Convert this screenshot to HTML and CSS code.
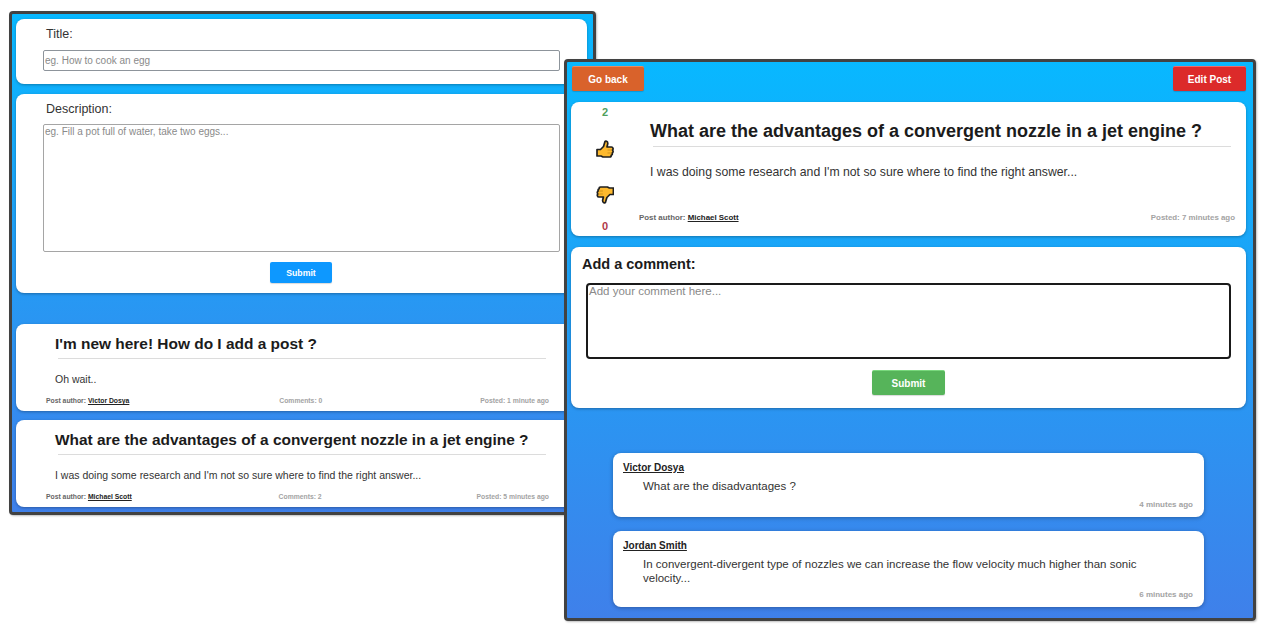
FILE: index.html
```html
<!DOCTYPE html>
<html lang="en">
<head>
<meta charset="utf-8">
<title>Forum posts</title>
<link rel="stylesheet" href="styles.css">
</head>
<body>
<section class="window window-list">
  <div class="card field-card title-card">
    <label class="field-label">Title:</label>
    <input class="field-input" type="text" placeholder="eg. How to cook an egg">
  </div>
  <div class="card field-card desc-card">
    <label class="field-label">Description:</label>
    <textarea class="field-area" placeholder="eg. Fill a pot full of water, take two eggs..."></textarea>
    <button class="btn btn-blue">Submit</button>
  </div>
  <article class="card post first-post">
    <h2 class="post-title">I'm new here! How do I add a post ?</h2>
    <p class="post-body">Oh wait..</p>
    <div class="post-meta">
      <span>Post author: <a class="author">Victor Dosya</a></span>
      <span class="muted count-link">Comments: 0</span>
      <span class="muted">Posted: 1 minute ago</span>
    </div>
  </article>
  <article class="card post">
    <h2 class="post-title">What are the advantages of a convergent nozzle in a jet engine ?</h2>
    <p class="post-body">I was doing some research and I'm not so sure where to find the right answer...</p>
    <div class="post-meta">
      <span>Post author: <a class="author">Michael Scott</a></span>
      <span class="muted count-link">Comments: 2</span>
      <span class="muted">Posted: 5 minutes ago</span>
    </div>
  </article>
</section>

<section class="window window-detail">
  <div class="top-bar">
    <button class="btn btn-orange">Go back</button>
    <button class="btn btn-red">Edit Post</button>
  </div>
  <article class="card detail">
    <div class="votes">
      <span class="count up">2</span>
      <svg class="thumb thumb-up" viewBox="0 0 18.400 18" aria-hidden="true"><path d="M1 9.500H4.500L7.500 6.500L9 1.500C9.500.8 11.800 1 11.800 3.500L11 7H15.500C17.200 7 17.500 9.500 16.500 10C17.500 11 17.200 12.500 16.200 13C16.600 14.200 16 15 15.200 15.300C15.300 16.500 14.800 17 13.800 17H7L5 16H1Z" fill="#fdb92e" stroke="#1f1f1f" stroke-width="1.700" stroke-linejoin="round"/><path d="M11.500 10H16M11.500 13H15.500" fill="none" stroke="#c48a1a" stroke-width=".8"/></svg>
      <svg class="thumb thumb-down" viewBox="0 0 18.400 18" aria-hidden="true"><g transform="rotate(180 9.200 9)"><path d="M1 9.500H4.500L7.500 6.500L9 1.500C9.500.8 11.800 1 11.800 3.500L11 7H15.500C17.200 7 17.500 9.500 16.500 10C17.500 11 17.200 12.500 16.200 13C16.600 14.200 16 15 15.200 15.300C15.300 16.500 14.800 17 13.800 17H7L5 16H1Z" fill="#fdb92e" stroke="#1f1f1f" stroke-width="1.700" stroke-linejoin="round"/><path d="M11.500 10H16M11.500 13H15.500" fill="none" stroke="#c48a1a" stroke-width=".8"/></g></svg>
      <span class="count down">0</span>
    </div>
    <div class="detail-main">
      <h2 class="post-title detail-title">What are the advantages of a convergent nozzle in a jet engine ?</h2>
      <p class="post-body detail-body">I was doing some research and I'm not so sure where to find the right answer...</p>
      <div class="post-meta detail-meta">
        <span>Post author: <a class="author">Michael Scott</a></span>
        <span class="muted">Posted: 7 minutes ago</span>
      </div>
    </div>
  </article>
  <div class="card add-comment">
    <h3 class="add-title">Add a comment:</h3>
    <textarea class="comment-area" placeholder="Add your comment here..."></textarea>
    <button class="btn btn-green">Submit</button>
  </div>
  <div class="comments">
    <div class="comment comment-short">
      <a class="comment-author">Victor Dosya</a>
      <p class="comment-text">What are the disadvantages ?</p>
      <span class="comment-time">4 minutes ago</span>
    </div>
    <div class="comment comment-long">
      <a class="comment-author">Jordan Smith</a>
      <p class="comment-text">In convergent-divergent type of nozzles we can increase the flow velocity much higher than sonic velocity...</p>
      <span class="comment-time">6 minutes ago</span>
    </div>
  </div>
</section>
</body>
</html>
```
FILE: styles.css
```css
* { box-sizing: border-box; }
html, body { margin: 0; height: 100%; background: #fff; overflow: hidden; }
body { position: relative; font-family: "Liberation Sans", Arial, sans-serif; color: #212529; }

.window {
  position: absolute;
  display: flex;
  flex-direction: column;
  border: 3px solid #424242;
  border-radius: 4px;
  background: linear-gradient(180deg, #08b8ff 0%, #3f80ea 100%);
  box-shadow: 1px 1px 2px rgba(0,0,0,.25);
  overflow: hidden;
}
.window-list { left: 9px; top: 11px; width: 587px; height: 504px; padding: 5px 6px 0 4px; }
.window-detail { left: 564px; top: 59px; width: 692px; height: 562px; padding: 4px 7px 0 4px; }

.card { background: #fff; border-radius: 8px; box-shadow: 0 1px 3px rgba(0,0,0,.3); flex: none; }

.field-card { display: flex; flex-direction: column; padding: 0 27px; }
.title-card { height: 65px; margin-bottom: 10px; }
.desc-card { height: 199px; margin-bottom: 31px; }
.field-label { font-size: 12.500px; line-height: 16px; margin: 7px 0 8px 3px; color: #333; }
.desc-card .field-label { margin-bottom: 7px; }
.field-input, .field-area {
  display: block; width: 517px; margin: 0; padding: 1px; font: 10px "Liberation Sans", Arial, sans-serif;
  background: #fff; border: 1px solid #8d949b; border-radius: 2px; outline: none; resize: none;
}
.field-input { height: 21px; }
.field-area { height: 128px; border-color: #a5a5a5; }
::placeholder { color: #8a8a8a; opacity: 1; }

.btn {
  display: block; border: 0; border-radius: 2px; color: #fff; font: bold 10px "Liberation Sans", Arial, sans-serif;
  padding: 0; cursor: pointer; box-shadow: 0 1px 1px rgba(0,0,0,.15);
}
.btn-blue { width: 62px; height: 21px; background: #0d98ff; margin: 10px 0 0 227px; font-size: 8.700px; }
.btn-orange { width: 72px; height: 25px; background: #d9622b; border-top: 1px solid #ea8a5e; }
.btn-red { width: 73px; height: 25px; background: #dc2a2a; border-top: 1px solid #ee6a6a; }
.btn-green { width: 73px; height: 25px; background: #56b45a; border-top: 1px solid #79d87d; margin: 11px 0 0 290px; }

.post { height: 87px; padding: 10px 41px 0 39px; position: relative; }
.first-post { margin-bottom: 9px; }
.post-title { margin: 0; font-size: 15.450px; line-height: 20px; font-weight: bold; color: #1b1b1b; }
.post-title::after { content: ""; display: block; height: 1px; background: #dcdcdc; margin: 4px 0 0 3px; }
.post-body { margin: 13px 0 0; font-size: 10.500px; line-height: 14px; color: #333; }
.post-meta {
  position: absolute; left: 30px; right: 38px; bottom: 6px; display: flex; justify-content: space-between;
  font-size: 6.800px; line-height: 9px; font-weight: bold; color: #666;
}
.author { color: #222; text-decoration: underline; }
.muted { color: #a3a3a3; }
.count-link { margin-right: 8px; }

.top-bar { display: flex; justify-content: space-between; padding-left: 1px; margin-bottom: 11px; }
.detail { display: flex; height: 134px; margin-bottom: 11px; }
.votes { width: 68px; flex: none; display: flex; flex-direction: column; align-items: center; padding-top: 4px; }
.count { font-size: 11px; line-height: 13px; font-weight: bold; }
.count.up { color: #4f9f5c; }
.count.down { color: #b0394a; margin-top: 16px; }
.thumb { width: 18.400px; height: 18px; display: block; }
.thumb-up { margin-top: 21px; }
.thumb-down { margin-top: 28px; }
.detail-main { position: relative; flex: 1; padding: 17px 15px 0 11px; }
.detail-title { font-size: 18px; line-height: 24px; }
.detail-title::after { margin: 3px 0 0 3px; }
.detail-body { margin-top: 18px; font-size: 12.250px; line-height: 15px; }
.detail-meta { left: 0; right: 11px; bottom: 14px; font-size: 7.900px; }

.add-comment { height: 161px; padding: 8px 15px 0 11px; }
.add-title { margin: 0 0 9px; font-size: 14.500px; line-height: 19px; color: #1b1b1b; }
.comment-area {
  display: block; width: 645px; height: 76px; margin: 0 0 0 4px; padding: 0 1px; font: 11.500px "Liberation Sans", Arial, sans-serif;
  border: 2px solid #1a1a1a; border-radius: 4px; resize: none; outline: none;
}

.comments { padding: 45px 42px 0 42px; display: flex; flex-direction: column; gap: 14px; }
.comment { position: relative; background: #fff; border-radius: 8px; box-shadow: 0 1px 4px rgba(0,0,0,.3); padding: 9px 11px 0 10px; }
.comment-short { height: 64px; }
.comment-long { height: 76px; }
.comment-author { display: block; font-size: 10px; line-height: 12px; font-weight: bold; color: #222; text-decoration: underline; }
.comment-text { margin: 5px 0 0 20px; padding-right: 40px; font-size: 11.500px; line-height: 14px; color: #333; }
.comment-time { position: absolute; right: 11px; bottom: 7px; font-size: 8px; line-height: 10px; font-weight: bold; color: #a3a3a3; }
```
